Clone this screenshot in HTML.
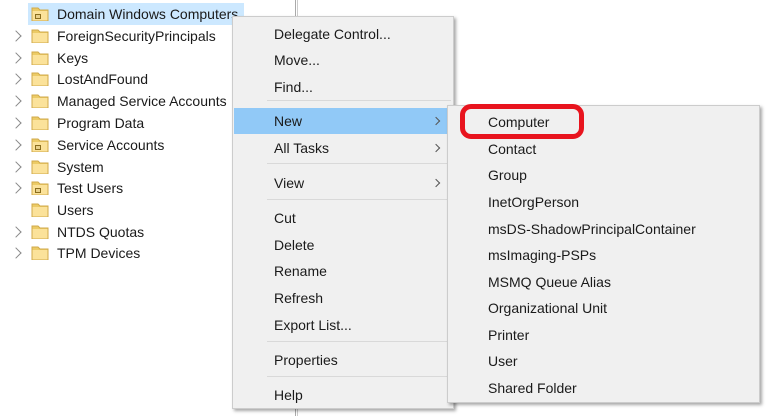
<!DOCTYPE html>
<html><head><meta charset="utf-8"><style>
*{margin:0;padding:0;box-sizing:border-box}
body{width:768px;height:416px;background:#fff;position:relative;overflow:hidden;font-family:"Liberation Sans",sans-serif;font-size:14px;color:#1a1a1a}
.t{position:absolute;left:57px;line-height:16px;margin-top:-1px}
.f{position:absolute;left:31px;width:18px;height:15px}
.c{position:absolute;left:12px;width:8px;height:8px;border-right:1.5px solid #888;border-bottom:1.5px solid #888;transform:rotate(-45deg)}
.vl{position:absolute;left:295px;top:0;width:3px;height:416px;border-left:1px solid #aaa;border-right:1px solid #ccc}
.m{position:absolute;background:#f0f0f0;border:1px solid #ccc;box-shadow:2px 2px 3px rgba(0,0,0,.35)}
.i{position:absolute;line-height:16px;margin-top:-1px}
.s{position:absolute;left:34px;right:2px;height:1px;background:#d9d9d9}
.a{position:absolute;left:200px;width:6px;height:6px;border-right:1.3px solid #555;border-bottom:1.3px solid #555;transform:rotate(-45deg)}
</style></head><body>
<div style="position:absolute;left:28px;top:3px;width:216px;height:22px;background:#cce8ff"></div>
<div class="vl"></div>
<svg width="0" height="0" style="position:absolute"><defs>
<g id="fo"><path d="M1 2h6l2 2h8v11H1z" fill="#eccb66"/><path d="M1 5h16v10H1z" fill="#fbe29a"/><path d="M1 2h6l2 2h8v11H1z" fill="none" stroke="#d0aa4a" stroke-width="1"/></g>
<g id="fl"><use href="#fo"/><rect x="4" y="8" width="6" height="5" fill="#8a6d1e"/><rect x="5" y="9" width="4" height="3" fill="#e8d08a"/></g>
</defs></svg>
<svg class="f" style="top:6px"><use href="#fl"/></svg><div class="t" style="top:7px">Domain Windows Computers</div>
<div class="c" style="top:32px"></div><svg class="f" style="top:28px"><use href="#fo"/></svg><div class="t" style="top:29px">ForeignSecurityPrincipals</div>
<div class="c" style="top:54px"></div><svg class="f" style="top:50px"><use href="#fo"/></svg><div class="t" style="top:51px">Keys</div>
<div class="c" style="top:75px"></div><svg class="f" style="top:71px"><use href="#fo"/></svg><div class="t" style="top:72px">LostAndFound</div>
<div class="c" style="top:97px"></div><svg class="f" style="top:93px"><use href="#fo"/></svg><div class="t" style="top:94px">Managed Service Accounts</div>
<div class="c" style="top:119px"></div><svg class="f" style="top:115px"><use href="#fo"/></svg><div class="t" style="top:116px">Program Data</div>
<div class="c" style="top:141px"></div><svg class="f" style="top:137px"><use href="#fl"/></svg><div class="t" style="top:138px">Service Accounts</div>
<div class="c" style="top:163px"></div><svg class="f" style="top:159px"><use href="#fo"/></svg><div class="t" style="top:160px">System</div>
<div class="c" style="top:184px"></div><svg class="f" style="top:180px"><use href="#fl"/></svg><div class="t" style="top:181px">Test Users</div>
<svg class="f" style="top:202px"><use href="#fo"/></svg><div class="t" style="top:203px">Users</div>
<div class="c" style="top:228px"></div><svg class="f" style="top:224px"><use href="#fo"/></svg><div class="t" style="top:225px">NTDS Quotas</div>
<div class="c" style="top:249px"></div><svg class="f" style="top:245px"><use href="#fo"/></svg><div class="t" style="top:246px">TPM Devices</div>

<div class="m" style="left:232px;top:16px;width:222px;height:393px">
<div style="position:absolute;left:1px;top:91px;width:218px;height:26px;background:#91c9f7"></div>
<div class="i" style="left:41px;top:10px">Delegate Control...</div>
<div class="i" style="left:41px;top:36px">Move...</div>
<div class="i" style="left:41px;top:63px">Find...</div>
<div class="s" style="top:83px"></div>
<div class="i" style="left:41px;top:97px">New</div><div class="a" style="top:101px"></div>
<div class="i" style="left:41px;top:124px">All Tasks</div><div class="a" style="top:128px"></div>
<div class="s" style="top:146px"></div>
<div class="i" style="left:41px;top:159px">View</div><div class="a" style="top:163px"></div>
<div class="s" style="top:182px"></div>
<div class="i" style="left:41px;top:194px">Cut</div>
<div class="i" style="left:41px;top:221px">Delete</div>
<div class="i" style="left:41px;top:247px">Rename</div>
<div class="i" style="left:41px;top:274px">Refresh</div>
<div class="i" style="left:41px;top:301px">Export List...</div>
<div class="s" style="top:324px"></div>
<div class="i" style="left:41px;top:336px">Properties</div>
<div class="s" style="top:359px"></div>
<div class="i" style="left:41px;top:371px">Help</div>
</div>

<div class="m" style="left:447px;top:105px;width:313px;height:298px">
<div class="i" style="left:40px;top:9px">Computer</div>
<div class="i" style="left:40px;top:36px">Contact</div>
<div class="i" style="left:40px;top:62px">Group</div>
<div class="i" style="left:40px;top:89px">InetOrgPerson</div>
<div class="i" style="left:40px;top:116px">msDS-ShadowPrincipalContainer</div>
<div class="i" style="left:40px;top:142px">msImaging-PSPs</div>
<div class="i" style="left:40px;top:169px">MSMQ Queue Alias</div>
<div class="i" style="left:40px;top:195px">Organizational Unit</div>
<div class="i" style="left:40px;top:222px">Printer</div>
<div class="i" style="left:40px;top:248px">User</div>
<div class="i" style="left:40px;top:275px">Shared Folder</div>
</div>
<div style="position:absolute;left:460px;top:104px;width:124px;height:35px;border:5px solid #e8141e;border-radius:11px"></div>
</body></html>
